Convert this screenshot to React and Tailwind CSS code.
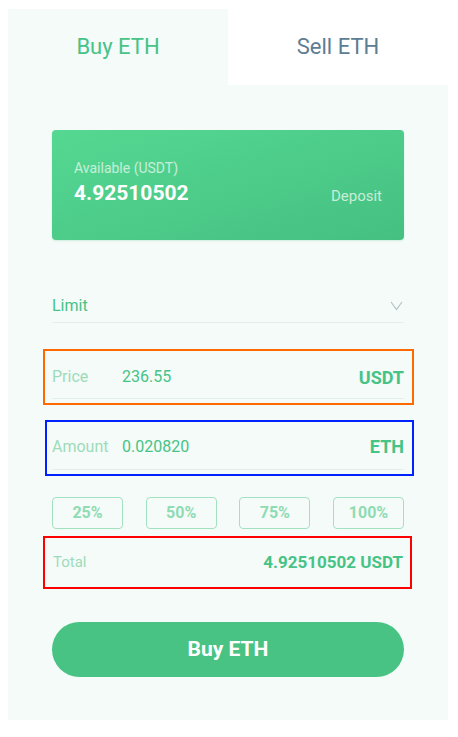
const font = { fontFamily: "Roboto, 'Noto Sans', sans-serif" };

export default function App() {
  const percents = ["25%", "50%", "75%", "100%"];

  return (
    <div className="w-[458px] h-[737px] bg-white pt-[9px] px-[8px]" style={font}>
      <div className="w-[440px] h-[711px] bg-[#f5fbf8] flex flex-col">
        {/* Tabs */}
        <div className="flex h-[76px]">
          <div className="w-[220px] flex items-center justify-center pb-[1px] text-[22px] text-[#46c386]">
            Buy ETH
          </div>
          <div className="w-[220px] bg-white flex items-center justify-center pb-[1px] text-[22px] text-[#5c7d93]">
            Sell ETH
          </div>
        </div>

        <div className="px-[44px] pt-[45px] flex flex-col">
          {/* Balance card */}
          <div className="h-[110px] rounded-[4px] bg-gradient-to-br from-[#55d892] to-[#45c081] px-[22px] pt-[29px] flex items-start justify-between shadow-[0_1px_2px_rgba(60,180,120,0.2)]">
            <div className="flex flex-col">
              <span className="text-[14px] leading-[18px] text-white/65">Available (USDT)</span>
              <span className="text-[21px] leading-[28px] font-bold text-white mt-[2px]">4.92510502</span>
            </div>
            <span className="text-[15px] text-white/70 mt-[26px]">Deposit</span>
          </div>

          {/* Order type */}
          <div className="mt-[49px] h-[34px] flex items-center justify-between border-b border-[#e2f0e8]">
            <span className="text-[16px] text-[#46c386]">Limit</span>
            <svg width="13" height="10" viewBox="0 0 13 10" className="mr-[1px]">
              <polyline points="1,1 6.5,8.5 12,1" fill="none" stroke="#aebfc8" strokeWidth="1.1" />
            </svg>
          </div>

          {/* Price */}
          <div className="mt-[26px] -ml-[9px] -mr-[10px] h-[56px] border-2 border-[#ff6a00] pl-[7px] pr-[8px]">
            <div className="h-[48px] pt-[5px] flex items-center border-b border-[#e2f0e8]">
              <span className="w-[70px] text-[16px] text-[#9ddbbb]">Price</span>
              <span className="text-[16px] text-[#46c386]">236.55</span>
              <span className="ml-auto text-[18px] font-bold text-[#46c386]">USDT</span>
            </div>
          </div>

          {/* Amount */}
          <div className="mt-[15px] -ml-[7px] -mr-[10px] h-[56px] border-2 border-[#0022ff] pl-[5px] pr-[8px]">
            <div className="h-[48px] pt-[2px] flex items-center border-b border-[#e2f0e8]">
              <span className="w-[70px] text-[16px] text-[#9ddbbb]">Amount</span>
              <span className="text-[16px] text-[#46c386]">0.020820</span>
              <span className="ml-auto text-[18px] font-bold text-[#46c386]">ETH</span>
            </div>
          </div>

          {/* Percent buttons */}
          <div className="mt-[21px] flex justify-between">
            {percents.map((p) => (
              <div
                key={p}
                className="w-[71px] h-[32px] rounded-[4px] border border-[#a3e2c1] flex items-center justify-center text-[16px] font-bold text-[#8fdbb3]"
              >
                {p}
              </div>
            ))}
          </div>

          {/* Total */}
          <div className="mt-[7px] -ml-[9px] -mr-[8px] h-[53px] border-2 border-[#ff0000] pl-[8px] pr-[7px] flex items-center">
            <span className="text-[15px] text-[#9ddbbb]">Total</span>
            <span className="ml-auto text-[17px] font-bold text-[#46c386]">4.92510502 USDT</span>
          </div>

          {/* Submit */}
          <button className="mt-[33px] h-[55px] rounded-full bg-[#48c383] text-white text-[21px] font-bold flex items-center justify-center">
            Buy ETH
          </button>
        </div>
      </div>
    </div>
  );
}
